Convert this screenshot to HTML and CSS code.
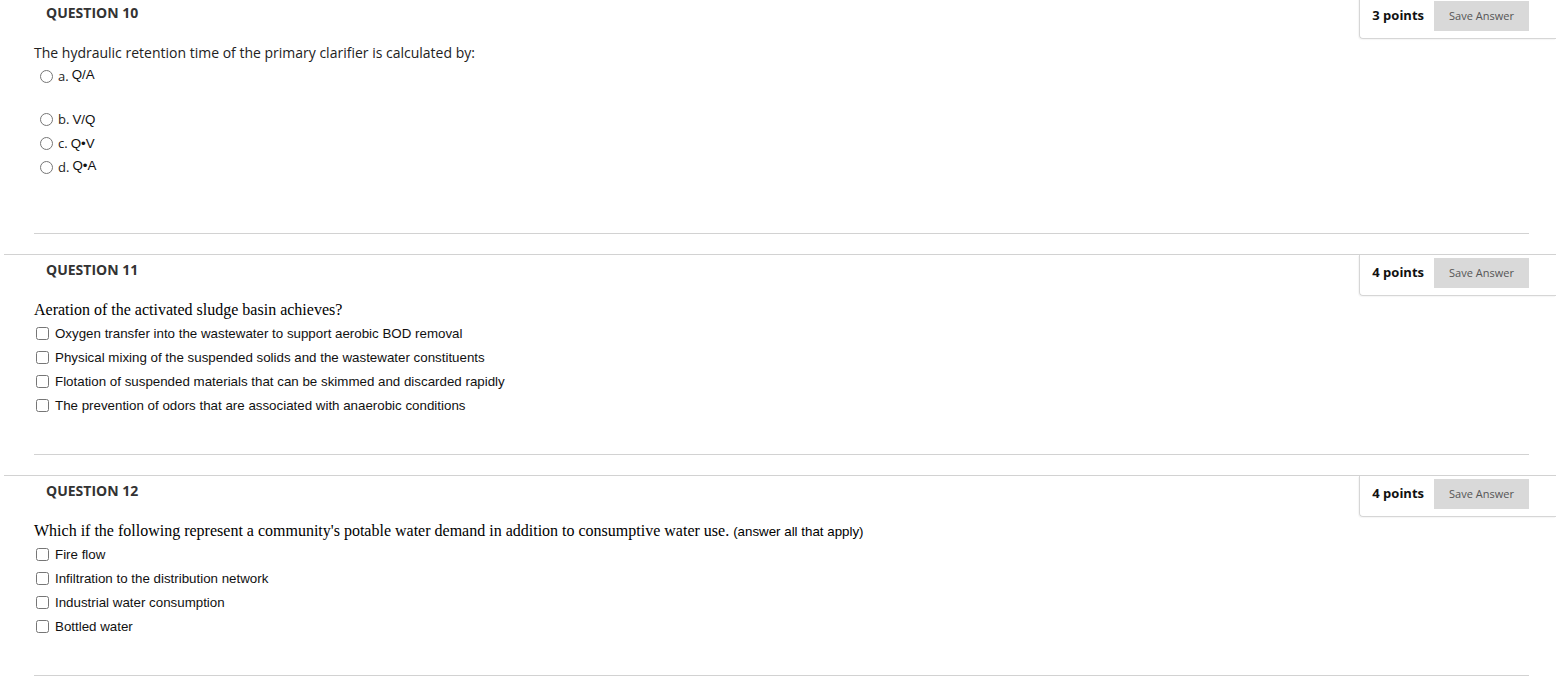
FILE: index.html
```html
<!DOCTYPE html>
<html lang="en">
<head>
<meta charset="utf-8">
<title>Questions</title>
<link rel="stylesheet" href="styles.css">
</head>
<body>
<div class="page">
  <section class="q">
    <div class="q-head">
      <h3 class="q-title">QUESTION 10</h3>
      <div class="points-box"><span class="pts">3 points</span><button class="save" type="button">Save Answer</button></div>
    </div>
    <div class="q-body">
      <p class="q-text sans">The hydraulic retention time of the primary clarifier is calculated by:</p>
      <ul class="answers extra">
        <li class="answer spaced"><input class="radio" type="radio" name="q10"><span class="letter">a.</span><span class="atext raised">Q/A</span></li>
        <li class="answer"><input class="radio" type="radio" name="q10"><span class="letter">b.</span><span class="atext">V/Q</span></li>
        <li class="answer"><input class="radio" type="radio" name="q10"><span class="letter">c.</span><span class="atext">Q•V</span></li>
        <li class="answer"><input class="radio" type="radio" name="q10"><span class="letter">d.</span><span class="atext raised">Q•A</span></li>
      </ul>
    </div>
    <hr class="sep">
  </section>

  <section class="q">
    <div class="q-head">
      <h3 class="q-title">QUESTION 11</h3>
      <div class="points-box"><span class="pts">4 points</span><button class="save" type="button">Save Answer</button></div>
    </div>
    <div class="q-body">
      <p class="q-text serif">Aeration of the activated sludge basin achieves?</p>
      <ul class="answers">
        <li class="answer"><input class="check" type="checkbox"><span class="atext">Oxygen transfer into the wastewater to support aerobic BOD removal</span></li>
        <li class="answer"><input class="check" type="checkbox"><span class="atext">Physical mixing of the suspended solids and the wastewater constituents</span></li>
        <li class="answer"><input class="check" type="checkbox"><span class="atext">Flotation of suspended materials that can be skimmed and discarded rapidly</span></li>
        <li class="answer"><input class="check" type="checkbox"><span class="atext">The prevention of odors that are associated with anaerobic conditions</span></li>
      </ul>
    </div>
    <hr class="sep">
  </section>

  <section class="q">
    <div class="q-head">
      <h3 class="q-title">QUESTION 12</h3>
      <div class="points-box"><span class="pts">4 points</span><button class="save" type="button">Save Answer</button></div>
    </div>
    <div class="q-body">
      <p class="q-text serif">Which if the following represent a community's potable water demand in addition to consumptive water use. <span class="arial">(answer all that apply)</span></p>
      <ul class="answers">
        <li class="answer"><input class="check" type="checkbox"><span class="atext">Fire flow</span></li>
        <li class="answer"><input class="check" type="checkbox"><span class="atext">Infiltration to the distribution network</span></li>
        <li class="answer"><input class="check" type="checkbox"><span class="atext">Industrial water consumption</span></li>
        <li class="answer"><input class="check" type="checkbox"><span class="atext">Bottled water</span></li>
      </ul>
    </div>
    <hr class="sep">
  </section>
</div>
</body>
</html>
```

FILE: styles.css
```css
* { box-sizing: border-box; }

html, body {
  margin: 0;
  padding: 0;
  background: #ffffff;
}

body {
  font-family: "Open Sans", "Liberation Sans", sans-serif;
  color: #000;
}

.page {
  margin-top: -3px;
  padding-left: 4px;
}

.q {
  border-top: 1px solid #d2d2d2;
  margin-bottom: 20px;
}

.q-head {
  display: flex;
  justify-content: space-between;
  align-items: flex-start;
}

.q-title {
  margin: 0;
  padding: 6px 0 0 42px;
  font-family: "Open Sans", sans-serif;
  font-weight: 700;
  font-size: 14px;
  line-height: 18px;
  color: #333;
}

.points-box {
  display: flex;
  align-items: center;
  gap: 10px;
  height: 41px;
  padding: 0 27px 5px 12px;
  border-left: 1px solid #d6d6d6;
  border-bottom: 1px solid #d6d6d6;
  border-bottom-left-radius: 4px;
  box-shadow: -1px 1px 1px rgba(0, 0, 0, 0.04);
}

.pts {
  font-family: "Open Sans", sans-serif;
  font-weight: 700;
  font-size: 13px;
  line-height: 16px;
  color: #111;
  margin-top: -1px;
}

.save {
  width: 95px;
  height: 30px;
  margin: 0;
  padding: 0;
  border: none;
  border-radius: 0;
  background: #d9d9d9;
  font-family: "Open Sans", sans-serif;
  font-size: 11px;
  color: #555;
}

.q-body {
  padding-left: 30px;
}

.q-text {
  margin: 4px 0 1px;
  height: 20px;
  line-height: 20px;
  color: #222;
}

.q-text.sans {
  font-family: "Open Sans", sans-serif;
  font-size: 14px;
}

.q-text.serif {
  font-family: "Liberation Serif", "Times New Roman", serif;
  font-size: 16px;
  color: #000;
}

.arial {
  font-family: "Liberation Sans", Arial, sans-serif;
  font-size: 13.33px;
  line-height: 15px;
}

.answers {
  list-style: none;
  margin: 0 0 37px;
  padding: 0;
}

.answers.extra {
  margin-bottom: 54px;
}

.answer {
  display: flex;
  align-items: center;
  height: 24px;
}

.answer.spaced {
  margin-bottom: 19px;
}

.radio {
  width: 13px;
  height: 13px;
  margin: 0 5px 0 6px;
}

.check {
  width: 13px;
  height: 13px;
  margin: 0 6px 0 2px;
}

.letter {
  font-family: "Open Sans", sans-serif;
  font-size: 13px;
  color: #222;
  margin-right: 3px;
}

.atext {
  font-family: "Liberation Sans", Arial, sans-serif;
  font-size: 13.33px;
  color: #111;
}

.atext.raised {
  margin-top: -3px;
}

.sep {
  margin: 0 27px 0 30px;
  border: none;
  border-top: 1px solid #d2d2d2;
  height: 0;
}
```
